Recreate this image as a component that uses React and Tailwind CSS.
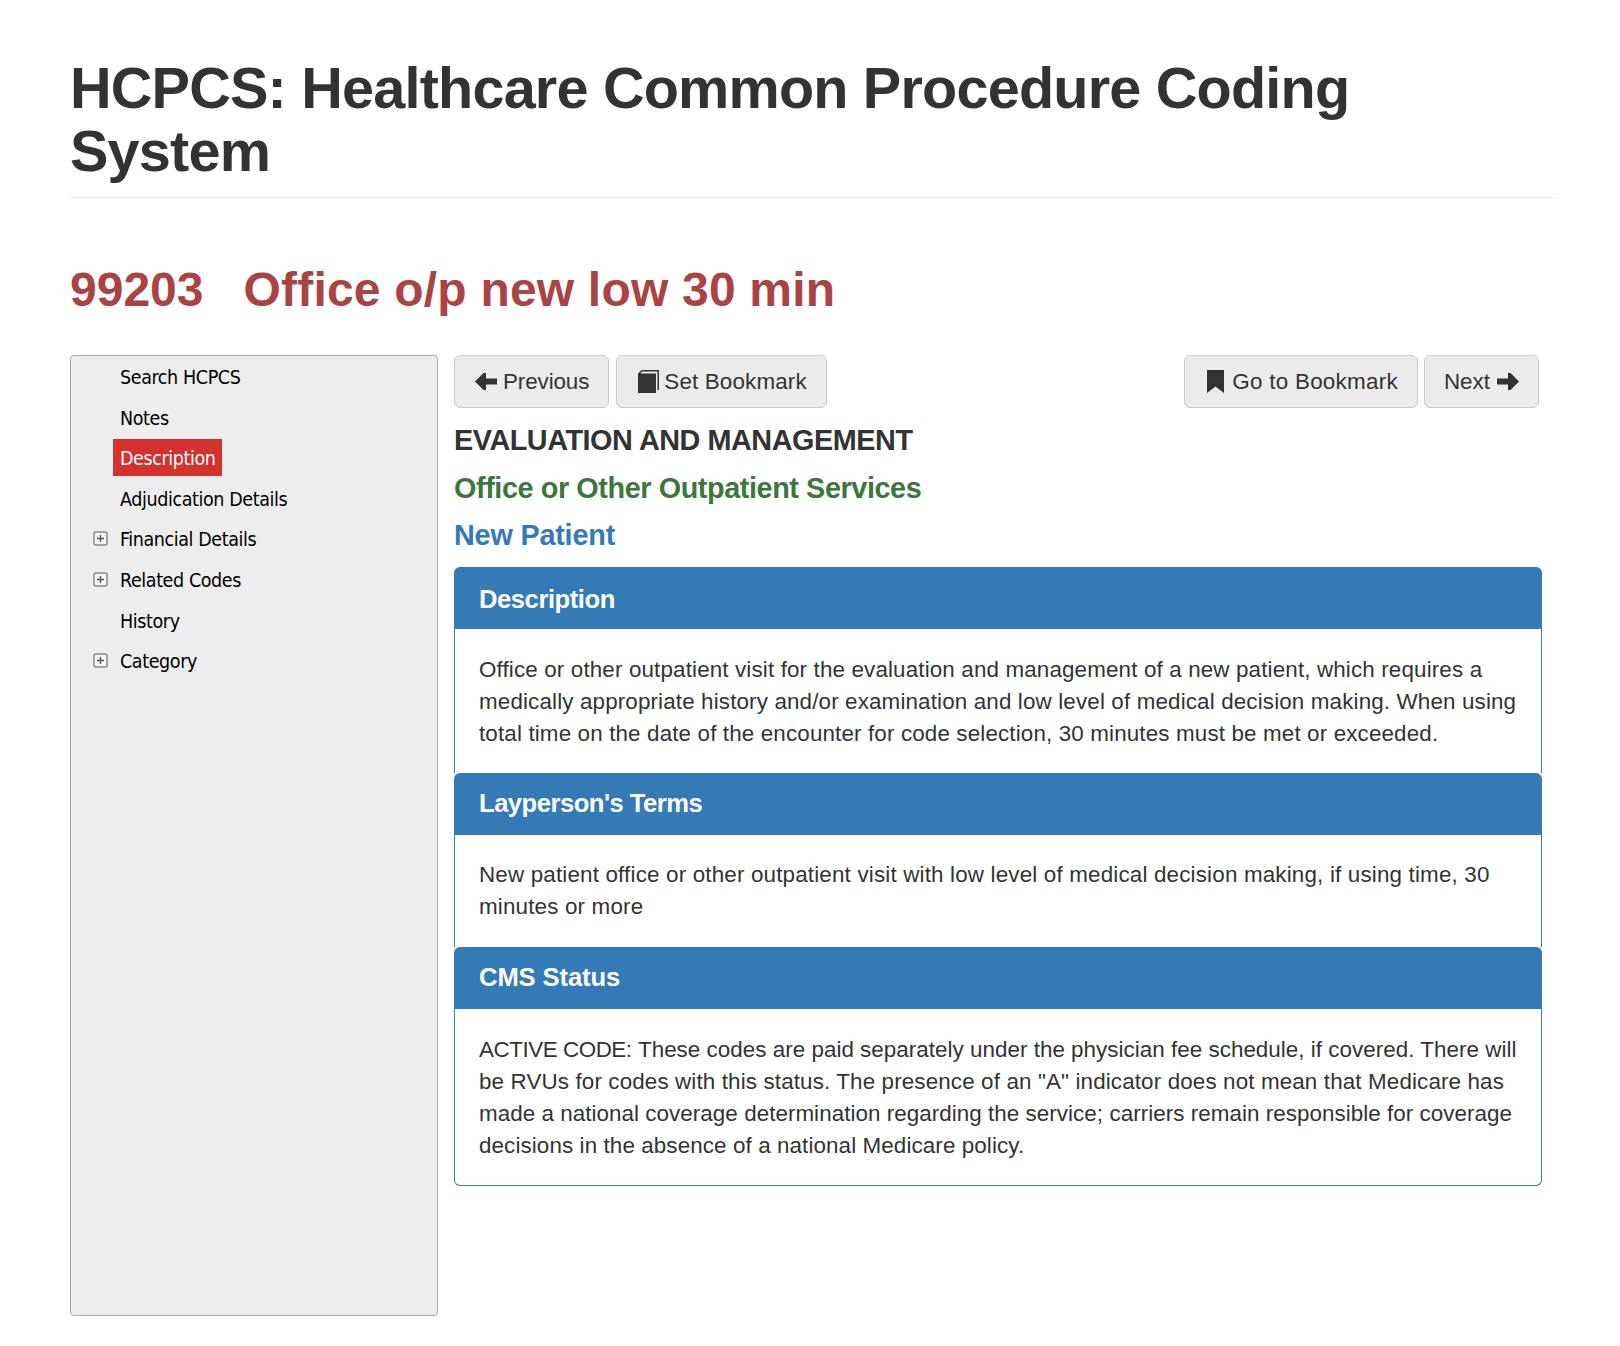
import React from "react";

const sideItems = [
  { label: "Search HCPCS" },
  { label: "Notes" },
  { label: "Description", active: true },
  { label: "Adjudication Details" },
  { label: "Financial Details", plus: true },
  { label: "Related Codes", plus: true },
  { label: "History" },
  { label: "Category", plus: true },
];

const PlusBox = () => (
  <svg width="15" height="15" viewBox="0 0 15 15" className="shrink-0">
    <rect x="1" y="1" width="13" height="13" rx="2" fill="#f4f4f4" stroke="#888" strokeWidth="1.5" />
    <path d="M4 7.5h7M7.5 4v7" stroke="#555" strokeWidth="1.3" fill="none" />
  </svg>
);

const ArrowLeft = () => (
  <svg width="22" height="17" viewBox="0 0 22 17" className="shrink-0 fill-[#333]">
    <path d="M0 8.5 8.5 0 11 0 11 5.5 22 5.5 22 11.5 11 11.5 11 17 8.5 17Z" />
  </svg>
);

const ArrowRight = () => (
  <svg width="22" height="17" viewBox="0 0 22 17" className="shrink-0 fill-[#333]">
    <path d="M22 8.5 13.5 0 11 0 11 5.5 0 5.5 0 11.5 11 11.5 11 17 13.5 17Z" />
  </svg>
);

const BookIcon = () => (
  <svg width="21" height="23" viewBox="0 0 21 23" className="shrink-0 fill-[#333]">
    <path d="M3 0.5Q3.5 0 4.5 0H21V20H19.5V1.5H4.5Q3 1.5 2.5 3.5H18V23H0V3.5Z" />
  </svg>
);

const BookmarkIcon = () => (
  <svg width="17" height="23" viewBox="0 0 17 23" className="shrink-0 fill-[#333]">
    <path d="M0 0H17V23L8.5 16.5 0 23Z" />
  </svg>
);

const Btn = ({ className, children }) => (
  <button className={`h-[53px] flex items-center bg-[#ebebeb] border border-[#ccc] rounded-[6px] text-[22.4px] text-[#333] ${className}`}>
    {children}
  </button>
);

const Panel = ({ title, titleClass, bodyClass, children }) => (
  <div>
    <div className={`bg-[#337ab7] text-white text-[25.6px] font-bold leading-[28px] px-[25px] rounded-t-[6px] ${titleClass}`}>
      {title}
    </div>
    <div className={`border-x border-[#337ab7] pl-[24px] pr-[20px] text-[22.4px] leading-[32px] text-[#333] ${bodyClass}`}>
      {children}
    </div>
  </div>
);

export default function App() {
  return (
    <div className="bg-white min-h-[1346px] pl-[70px] pr-[63px] pt-[57px] font-['Liberation_Sans',Arial,sans-serif] text-[#333]">
      <h1 className="text-[57.6px] font-bold leading-[63.4px] tracking-[-0.8px] pb-[13px] border-b border-[#eee]">
        HCPCS: Healthcare Common Procedure Coding System
      </h1>
      <h2 className="mt-[65px] text-[48px] font-bold leading-[53px] text-[#a94442] whitespace-pre">
        99203{"   "}<span className="tracking-[0.2px]">Office o/p new low 30 min</span>
      </h2>

      <div className="mt-[39px] flex items-start">
        {/* Tree */}
        <div className="w-[368px] h-[961px] shrink-0 bg-[#ededed] border border-[#aaa] rounded-[4px] pl-[22px] pt-[0.5px] font-['DejaVu_Sans_Condensed','DejaVu_Sans',sans-serif] text-[19.5px] tracking-[-0.4px] text-black">
          {sideItems.map((it) => (
            <div key={it.label} className="h-[40.6px] flex items-center">
              <div className="w-[20px] shrink-0 flex">{it.plus && <PlusBox />}</div>
              <span className={`h-[37px] flex items-center pt-[2px] pl-[7px] pr-[6.5px] ${it.active ? "bg-[#d3322e] text-white" : ""}`}>
                {it.label}
              </span>
            </div>
          ))}
        </div>

        {/* Main */}
        <div className="ml-[16px] w-[1088px] shrink-0">
          <div className="flex justify-between pr-[3px]">
            <div className="flex gap-[7px]">
              <Btn className="pl-[20px] pr-[19px] gap-[6px] tracking-[-0.1px]"><ArrowLeft />Previous</Btn>
              <Btn className="pl-[21px] pr-[19px] gap-[5px] tracking-[0.15px]"><BookIcon />Set Bookmark</Btn>
            </div>
            <div className="flex gap-[6px]">
              <Btn className="pl-[22px] pr-[19px] gap-[8px] tracking-[0.28px]"><BookmarkIcon />Go to Bookmark</Btn>
              <Btn className="px-[19px] gap-[7px]">Next<ArrowRight /></Btn>
            </div>
          </div>
          <h3 className="mt-[16px] text-[28.8px] font-bold leading-[32px] tracking-[-0.45px]">EVALUATION AND MANAGEMENT</h3>
          <h3 className="mt-[16px] text-[28.8px] font-bold leading-[32px] tracking-[-0.41px] text-[#3c763d]">Office or Other Outpatient Services</h3>
          <h3 className="mt-[15px] text-[28.8px] font-bold leading-[32px] tracking-[-0.2px] text-[#337ab7]">New Patient</h3>

          <div className="mt-[16px]">
            <Panel title="Description" titleClass="pt-[18px] pb-[16px] tracking-[-0.45px]" bodyClass="pt-[25px] pb-[23px] tracking-[0.14px]">
              Office or other outpatient visit for the evaluation and management of a new patient, which requires a medically appropriate history and/or examination and low level of medical decision making. When using total time on the date of the encounter for code selection, 30 minutes must be met or exceeded.
            </Panel>
            <Panel title="Layperson's Terms" titleClass="pt-[16px] pb-[18px] tracking-[-0.5px]" bodyClass="py-[24px] tracking-[0.17px]">
              New patient office or other outpatient visit with low level of medical decision making, if using time, 30 minutes or more
            </Panel>
            <Panel title="CMS Status" titleClass="pt-[16px] pb-[18px] tracking-[-0.1px]" bodyClass="pt-[25px] pb-[23px] border-b rounded-b-[6px] tracking-[0.1px]">
              <span className="tracking-[-0.45px]">ACTIVE CODE:</span> <span className="tracking-[0.03px]">These codes are paid separately under the physician fee schedule, if covered. There will</span> <span className="tracking-[0.13px]">be RVUs for codes with this status. The presence of an "A" indicator does not mean that Medicare has</span> <span className="tracking-[0.05px]">made a national coverage determination regarding the service; carriers remain responsible for coverage</span> decisions in the absence of a national Medicare policy.
            </Panel>
          </div>
        </div>
      </div>
    </div>
  );
}
